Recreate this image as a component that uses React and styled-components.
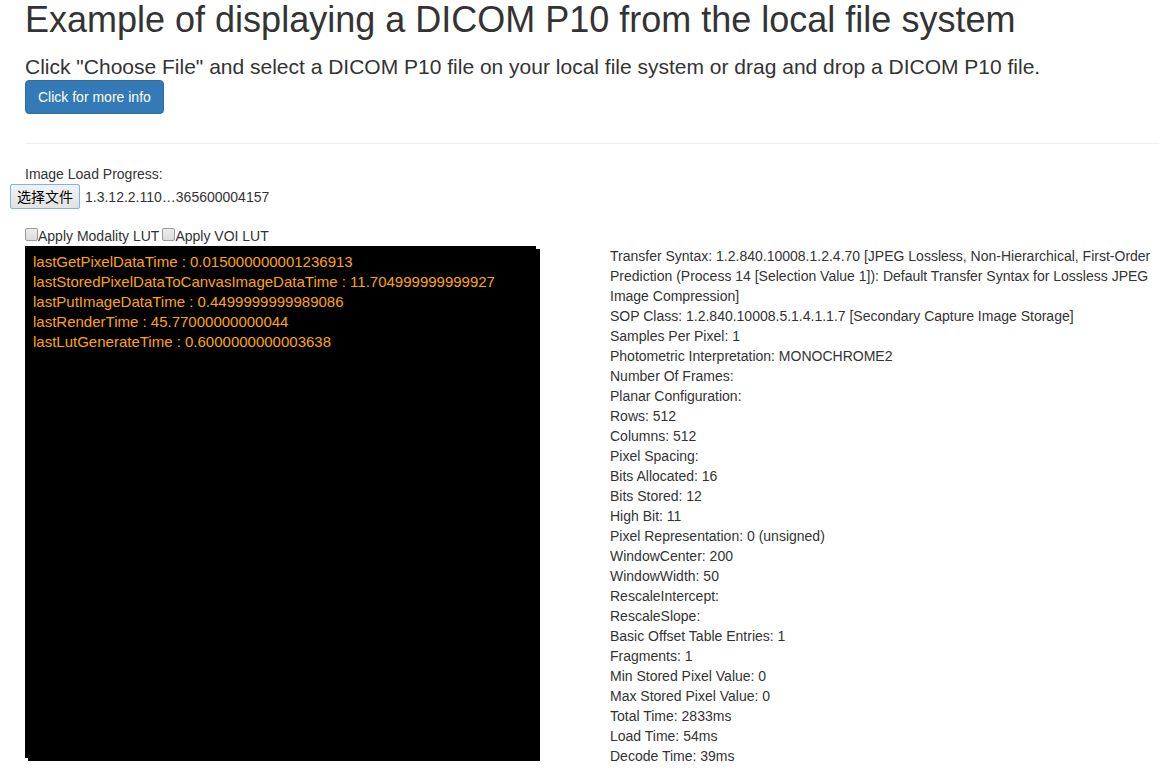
import React from "react";
import styled, { createGlobalStyle } from "styled-components";

const GlobalStyle = createGlobalStyle`
  html, body {
    margin: 0;
    padding: 0;
    background: #ffffff;
  }
  body {
    font-family: "Liberation Sans", Arial, Helvetica, sans-serif;
    font-size: 14px;
    line-height: 20px;
    color: #333333;
  }
  * {
    box-sizing: border-box;
  }
`;

const Page = styled.div`
  padding-left: 25px;
`;

const Title = styled.h1`
  margin: 0;
  font-size: 36px;
  font-weight: 500;
  line-height: 39.6px;
  color: #333333;
`;

const Lead = styled.h4`
  margin: 15px 0 0;
  font-size: 21px;
  font-weight: 500;
  line-height: 23px;
`;

const InfoButton = styled.button`
  display: inline-block;
  margin-top: 2px;
  padding: 6px 12px;
  font-family: inherit;
  font-size: 14px;
  line-height: 20px;
  color: #ffffff;
  background: #337ab7;
  border: 1px solid #2e6da4;
  border-radius: 4px;
  cursor: pointer;
`;

const Rule = styled.hr`
  margin: 29px 0 0;
  border: 0;
  border-top: 1px solid #eeeeee;
`;

const Controls = styled.div`
  padding-top: 20px;
`;

const Label = styled.div`
  line-height: 20px;
`;

const FileRow = styled.div`
  display: flex;
  align-items: center;
  gap: 5px;
  margin: 0 0 0 -15px;
  height: 25px;
`;

const FileButton = styled.button`
  height: 25px;
  padding: 0 6px;
  font-family: "Noto Sans CJK SC", "Liberation Sans", sans-serif;
  font-size: 14px;
  color: #000000;
  background: linear-gradient(#f2f2f2, #e2e2e2);
  border: 1px solid #7eb4ea;
  border-radius: 2px;
  cursor: pointer;
`;

const FileName = styled.span`
  margin-top: 1px;
  color: #333333;
`;

const CheckRow = styled.div`
  display: flex;
  align-items: center;
  margin-top: 18px;
  height: 19px;
`;

const CheckLabel = styled.label`
  display: inline-flex;
  align-items: center;
  margin-right: 3px;
  color: #333333;
`;

const Box = styled.span`
  display: inline-block;
  width: 13px;
  height: 13px;
  margin-top: -4px;
  border: 1px solid #9a9a9a;
  border-radius: 2px;
  background: linear-gradient(#ededed, #dcdcdc);
`;

const Viewer = styled.div`
  display: grid;
  grid-template-columns: 585px 1fr;
`;

const ViewportFrame = styled.div`
  position: relative;
  display: flow-root;
  width: 511px;
  height: 512px;
  background: #000000;
`;

const Canvas = styled.div`
  width: 512px;
  height: 512px;
  margin: 3px 0 0 3px;
  background: #000000;
`;

const Overlay = styled.div`
  position: absolute;
  top: 6px;
  left: 8px;
  color: #ffa500;
  font-size: 15px;
  line-height: 20px;
  white-space: nowrap;
`;

const Meta = styled.div`
  padding-right: 4px;
  line-height: 20px;
`;

const timings = [
  "lastGetPixelDataTime : 0.015000000001236913",
  "lastStoredPixelDataToCanvasImageDataTime : 11.704999999999927",
  "lastPutImageDataTime : 0.4499999999989086",
  "lastRenderTime : 45.77000000000044",
  "lastLutGenerateTime : 0.6000000000003638",
];

const meta = [
  "Transfer Syntax: 1.2.840.10008.1.2.4.70 [JPEG Lossless, Non-Hierarchical, First-Order Prediction (Process 14 [Selection Value 1]): Default Transfer Syntax for Lossless JPEG Image Compression]",
  "SOP Class: 1.2.840.10008.5.1.4.1.1.7 [Secondary Capture Image Storage]",
  "Samples Per Pixel: 1",
  "Photometric Interpretation: MONOCHROME2",
  "Number Of Frames:",
  "Planar Configuration:",
  "Rows: 512",
  "Columns: 512",
  "Pixel Spacing:",
  "Bits Allocated: 16",
  "Bits Stored: 12",
  "High Bit: 11",
  "Pixel Representation: 0 (unsigned)",
  "WindowCenter: 200",
  "WindowWidth: 50",
  "RescaleIntercept:",
  "RescaleSlope:",
  "Basic Offset Table Entries: 1",
  "Fragments: 1",
  "Min Stored Pixel Value: 0",
  "Max Stored Pixel Value: 0",
  "Total Time: 2833ms",
  "Load Time: 54ms",
  "Decode Time: 39ms",
];

const App = () => {
  return (
    <>
      <GlobalStyle />
      <Page>
        <Title>Example of displaying a DICOM P10 from the local file system</Title>
        <Lead>
          Click "Choose File" and select a DICOM P10 file on your local file
          system or drag and drop a DICOM P10 file.
        </Lead>
        <InfoButton type="button">Click for more info</InfoButton>
        <Rule />

        <Controls>
          <Label>Image Load Progress:</Label>
          <FileRow>
            <FileButton type="button">选择文件</FileButton>
            <FileName>1.3.12.2.110…365600004157</FileName>
          </FileRow>
          <CheckRow>
            <CheckLabel>
              <Box />
              Apply Modality LUT
            </CheckLabel>
            <CheckLabel>
              <Box />
              Apply VOI LUT
            </CheckLabel>
          </CheckRow>
        </Controls>

        <Viewer>
          <div>
            <ViewportFrame>
              <Canvas />
              <Overlay>
                {timings.map((line) => (
                  <div key={line}>{line}</div>
                ))}
              </Overlay>
            </ViewportFrame>
          </div>
          <Meta>
            {meta.map((line) => (
              <div key={line}>{line}</div>
            ))}
          </Meta>
        </Viewer>
      </Page>
    </>
  );
};

export default App;
